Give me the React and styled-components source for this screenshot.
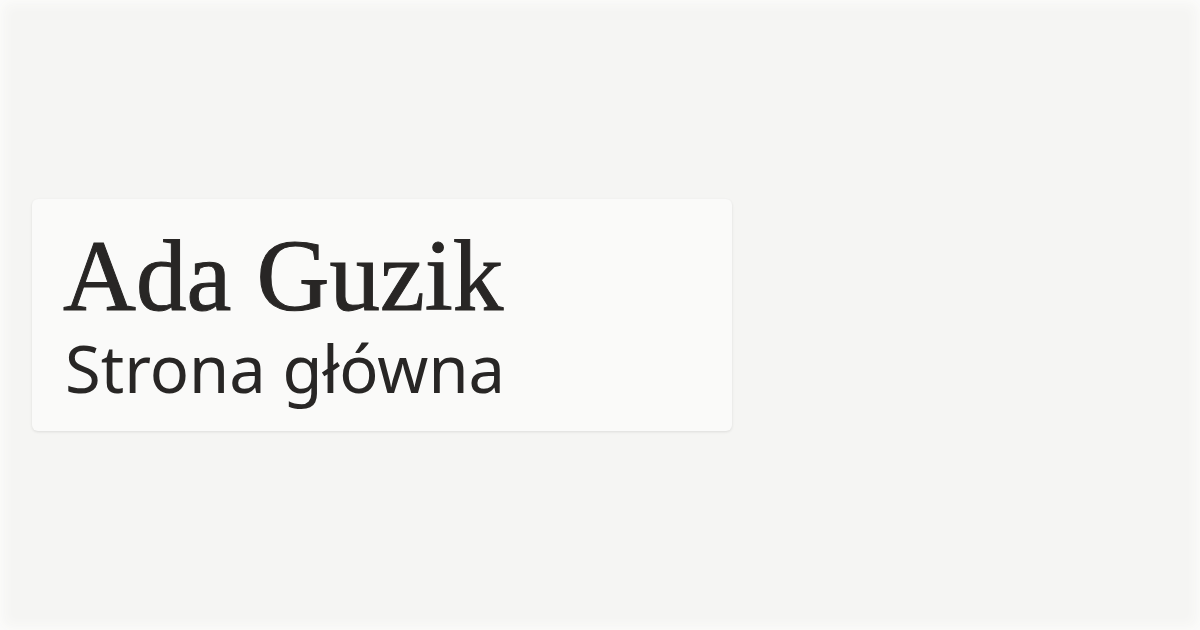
import { createGlobalStyle } from "styled-components";
import styled from "styled-components";

const GlobalStyle = createGlobalStyle`
  html, body {
    margin: 0;
    padding: 0;
  }
  body {
    background: #f5f5f3;
  }
`;

const Page = styled.div`
  width: 1200px;
  height: 630px;
  box-sizing: border-box;
  display: flex;
  align-items: center;
  padding: 0 32px;
  background: #f5f5f3;
  box-shadow: inset 0 0 14px 2px #fdfdfc;
`;

const Card = styled.div`
  width: 700px;
  height: 232px;
  box-sizing: border-box;
  padding: 22px 32px 0 31px;
  background: #fafaf9;
  border-radius: 6px;
  box-shadow: 0 1px 3px rgba(0, 0, 0, 0.1);
  color: #282625;
`;

const Title = styled.h1`
  margin: 0;
  font-family: "Liberation Serif", "DejaVu Serif", serif;
  font-weight: 400;
  font-size: 101px;
  line-height: 110px;
  -webkit-text-stroke: 1px #282625;
`;

const Subtitle = styled.p`
  margin: 0;
  padding-left: 2px;
  font-family: "Noto Sans", "Open Sans", sans-serif;
  font-size: 65px;
  line-height: 74px;
`;

export default function App() {
  return (
    <>
      <GlobalStyle />
      <Page>
        <Card>
          <Title>Ada Guzik</Title>
          <Subtitle>Strona główna</Subtitle>
        </Card>
      </Page>
    </>
  );
}
